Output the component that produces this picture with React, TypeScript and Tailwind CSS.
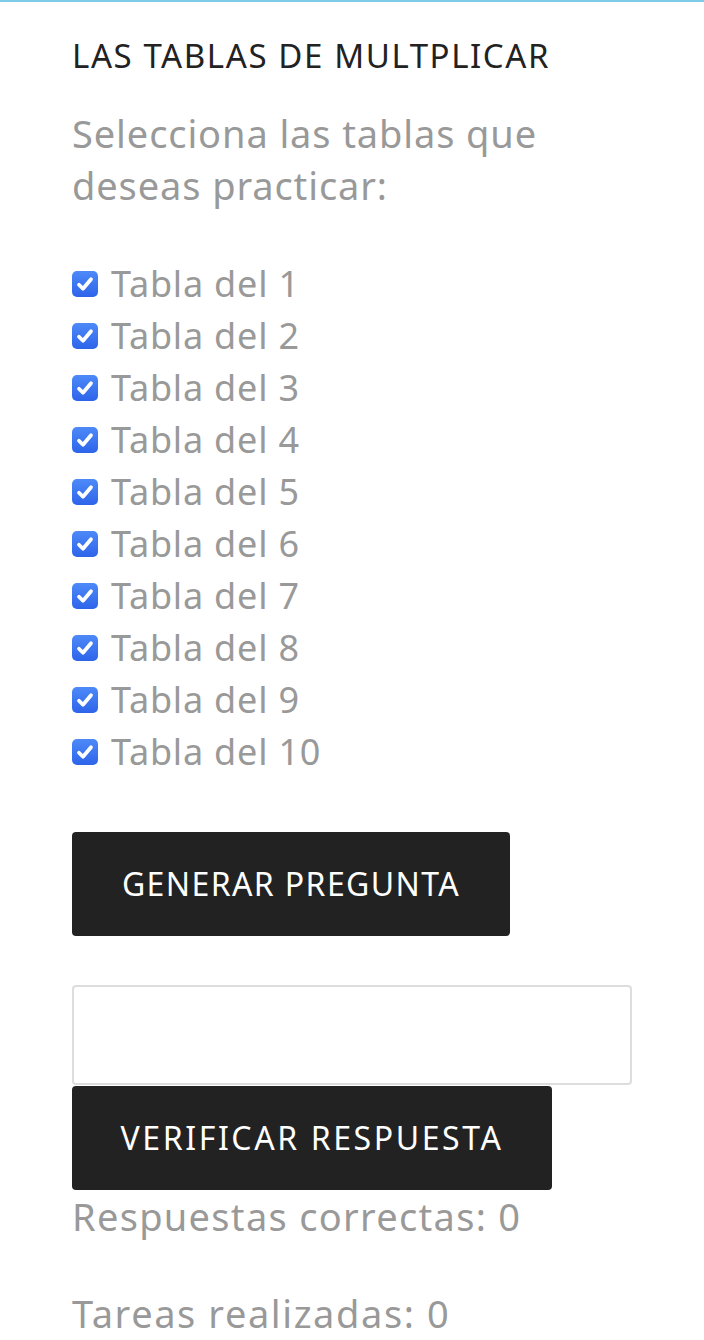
import { useState } from 'react';

const FONT = { fontFamily: '"Noto Sans", "Liberation Sans", sans-serif' };

// ─────────────────────────────────────────────────────────────────
// Checkbox row
// ─────────────────────────────────────────────────────────────────
function TablaCheck({ n, checked, onToggle }: { n: number; checked: boolean; onToggle: () => void }) {
  return (
    <label className="flex items-center h-[52px] gap-[13px] cursor-pointer select-none">
      <span
        onClick={onToggle}
        className={`flex items-center justify-center w-[26px] h-[26px] rounded-[5px] ${
          checked ? 'bg-[linear-gradient(180deg,#4d8af8,#2e64ea)]' : 'bg-white border border-[#767676]'
        }`}
      >
        {checked && (
          <svg viewBox="0 0 16 16" className="w-[20px] h-[20px]">
            <path d="M3.2 8.6 L6.4 11.8 L12.8 4.2" fill="none" stroke="white" strokeWidth="3" strokeLinecap="round" strokeLinejoin="round" />
          </svg>
        )}
      </span>
      <span className="text-[36px] tracking-[0.8px] text-[#999999] leading-none">Tabla del {n}</span>
    </label>
  );
}

// ─────────────────────────────────────────────────────────────────
// Root App
// ─────────────────────────────────────────────────────────────────
export default function App() {
  const [tablas, setTablas] = useState<boolean[]>(Array(10).fill(true));
  const [respuesta, setRespuesta] = useState('');

  const toggle = (i: number) => setTablas((t) => t.map((v, j) => (j === i ? !v : v)));

  return (
    <div className="min-h-screen bg-white border-t-2 border-[#7dcbe9]" style={FONT}>
      <div className="px-[72px] pt-[28px]">
        <h1 className="text-[33px] tracking-[1.6px] leading-[52px] text-[#222222] font-normal">LAS TABLAS DE MULTPLICAR</h1>

        <p className="mt-[25px] text-[38px] tracking-[0.9px] leading-[52px] text-[#999999] max-w-[500px]">
          Selecciona las tablas que deseas practicar:
        </p>

        <div className="mt-[47px] flex flex-col">
          {tablas.map((c, i) => (
            <TablaCheck key={i} n={i + 1} checked={c} onToggle={() => toggle(i)} />
          ))}
        </div>

        <button className="mt-[54px] w-[438px] h-[104px] bg-[#222222] rounded-[4px] text-white text-[32px] tracking-[1.4px]">
          GENERAR PREGUNTA
        </button>

        <div className="mt-[49px] flex flex-col items-start">
          <input
            value={respuesta}
            onChange={(e) => setRespuesta(e.target.value)}
            className="w-[560px] h-[100px] border-2 border-[#dddddd] rounded-[4px] px-4 text-[32px] outline-none"
          />
          <button className="mt-px w-[480px] h-[104px] bg-[#222222] rounded-[4px] text-white text-[32px] tracking-[2.6px]">
            VERIFICAR RESPUESTA
          </button>
        </div>

        <p className="text-[38px] tracking-[1.3px] leading-[52px] text-[#999999]">Respuestas correctas: 0</p>
        <p className="mt-[45px] text-[38px] tracking-[1.6px] leading-[52px] text-[#999999]">Tareas realizadas: 0</p>
      </div>
    </div>
  );
}
